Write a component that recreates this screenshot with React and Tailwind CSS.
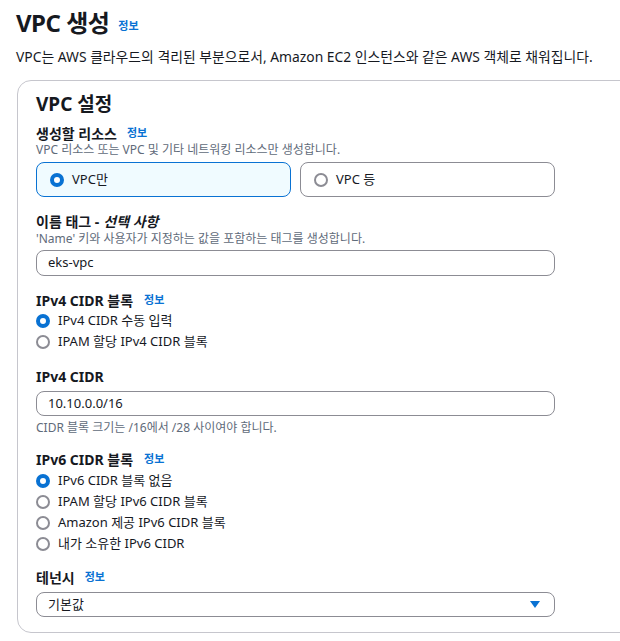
import React from "react";

const font = { fontFamily: '"Noto Sans", "Noto Sans CJK KR", sans-serif' };

function Info({ className = "" }) {
  return <span className={"text-[11px] font-bold text-[#0972d3] " + className}>정보</span>;
}

function Radio({ checked }) {
  return checked ? (
    <span className="inline-block w-[14px] h-[14px] rounded-full border-[4px] border-[#0972d3] bg-white shrink-0" />
  ) : (
    <span className="inline-block w-[14px] h-[14px] rounded-full border-2 border-[#8c8c94] bg-white shrink-0" />
  );
}

function RadioRow({ checked, children }) {
  return (
    <div className="flex items-center gap-[8px] h-[21px] text-[13px] text-[#16191f]">
      <Radio checked={checked} />
      <span>{children}</span>
    </div>
  );
}

export default function App() {
  return (
    <div className="w-[620px] h-[641px] bg-white overflow-hidden text-[#16191f]" style={font}>
      <div className="pl-[16px] pt-[8px] flex items-center h-[38px]">
        <h1 className="text-[24px] font-bold leading-[30px] tracking-[-0.5px]">VPC 생성</h1>
        <span className="ml-[9px] mt-[6px] text-[11px] font-bold text-[#0972d3]">정보</span>
      </div>
      <p className="pl-[16px] mt-[9px] text-[13.85px] leading-[20px] whitespace-nowrap">
        VPC는 AWS 클라우드의 격리된 부분으로서, Amazon EC2 인스턴스와 같은 AWS 객체로 채워집니다.
      </p>
      <div className="ml-[17px] mt-[13px] w-[640px] h-[553px] border border-[#c6c6cd] rounded-[14px] pl-[18px] pt-[11px]">
        <div className="text-[19px] font-bold leading-[24px]">VPC 설정</div>

        <div className="mt-[8px] flex items-center h-[18px] text-[14px] font-bold">
          생성할 리소스 <Info className="ml-[10px]" />
        </div>
        <div className="text-[12px] leading-[16px] text-[#5f6b7a]">
          VPC 리소스 또는 VPC 및 기타 네트워킹 리소스만 생성합니다.
        </div>
        <div className="mt-[4px] flex gap-[9px]">
          <div className="w-[255px] h-[35px] rounded-[8px] border border-[#0972d3] bg-[#f0fbff] flex items-center pl-[13px] gap-[8px] text-[13px]">
            <Radio checked />
            <span>VPC만</span>
          </div>
          <div className="w-[255px] h-[35px] rounded-[8px] border border-[#8c8c94] bg-white flex items-center pl-[13px] gap-[8px] text-[13px]">
            <Radio />
            <span>VPC 등</span>
          </div>
        </div>

        <div className="mt-[14px] h-[20px] flex items-center text-[14px] font-bold">
          이름 태그 - <i className="ml-[4px]">선택 사항</i>
        </div>
        <div className="text-[12px] leading-[16px] text-[#5f6b7a]">
          'Name' 키와 사용자가 지정하는 값을 포함하는 태그를 생성합니다.
        </div>
        <div className="mt-[3px] w-[519px] h-[26px] rounded-[8px] border border-[#8c8c94] flex items-center pl-[11px] text-[13px]">
          eks-vpc
        </div>

        <div className="mt-[15px] h-[19px] flex items-center text-[14px] font-bold">
          IPv4 CIDR 블록 <Info className="ml-[11px]" />
        </div>
        <div>
          <RadioRow checked>IPv4 CIDR 수동 입력</RadioRow>
          <RadioRow>IPAM 할당 IPv4 CIDR 블록</RadioRow>
        </div>

        <div className="mt-[14px] h-[20px] flex items-center text-[14px] font-bold">IPv4 CIDR</div>
        <div className="mt-[5px] w-[519px] h-[25px] rounded-[8px] border border-[#8c8c94] flex items-center pl-[11px] text-[13px]">
          10.10.0.0/16
        </div>
        <div className="mt-[4px] text-[12px] leading-[16px] text-[#5f6b7a]">
          CIDR 블록 크기는 /16에서 /28 사이여야 합니다.
        </div>

        <div className="mt-[13px] h-[20px] flex items-center text-[14px] font-bold">
          IPv6 CIDR 블록 <Info className="ml-[11px]" />
        </div>
        <div className="mt-[1px]">
          <RadioRow checked>IPv6 CIDR 블록 없음</RadioRow>
          <RadioRow>IPAM 할당 IPv6 CIDR 블록</RadioRow>
          <RadioRow>Amazon 제공 IPv6 CIDR 블록</RadioRow>
          <RadioRow>내가 소유한 IPv6 CIDR</RadioRow>
        </div>

        <div className="mt-[13px] h-[20px] flex items-center text-[14px] font-bold">
          테넌시 <Info className="ml-[10px]" />
        </div>
        <div className="mt-[5px] w-[519px] h-[25px] rounded-[8px] border border-[#8c8c94] flex items-center justify-between pl-[11px] pr-[14px] text-[13px]">
          <span>기본값</span>
          <svg width="10" height="8" viewBox="0 0 10 8">
            <path d="M0 0 H10 L5 7 Z" fill="#0972d3" />
          </svg>
        </div>
      </div>
    </div>
  );
}
